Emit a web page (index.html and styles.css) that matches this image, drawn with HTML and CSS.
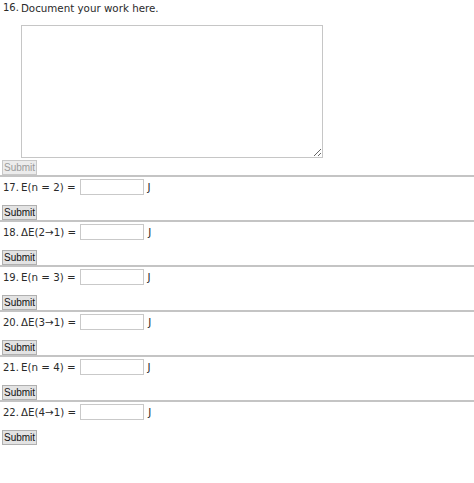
FILE: index.html
```html
<!DOCTYPE html>
<html>
<head>
<meta charset="utf-8">
<link rel="stylesheet" href="styles.css">
</head>
<body>
<div class="block first">
  <div class="row"><span class="num">16.</span><span class="q">Document your work here.</span></div>
  <textarea class="work"></textarea>
  <button class="btn" disabled>Submit</button>
</div>
<hr class="sep">
<div class="block">
  <div class="row"><span class="num">17.</span><span class="q">E(n = 2) =</span><input class="ans" type="text"><span class="unit">J</span></div>
  <button class="btn">Submit</button>
</div>
<hr class="sep">
<div class="block">
  <div class="row"><span class="num">18.</span><span class="q">ΔE(2→1) =</span><input class="ans" type="text"><span class="unit">J</span></div>
  <button class="btn">Submit</button>
</div>
<hr class="sep">
<div class="block">
  <div class="row"><span class="num">19.</span><span class="q">E(n = 3) =</span><input class="ans" type="text"><span class="unit">J</span></div>
  <button class="btn">Submit</button>
</div>
<hr class="sep">
<div class="block">
  <div class="row"><span class="num">20.</span><span class="q">ΔE(3→1) =</span><input class="ans" type="text"><span class="unit">J</span></div>
  <button class="btn">Submit</button>
</div>
<hr class="sep">
<div class="block">
  <div class="row"><span class="num">21.</span><span class="q">E(n = 4) =</span><input class="ans" type="text"><span class="unit">J</span></div>
  <button class="btn">Submit</button>
</div>
<hr class="sep">
<div class="block">
  <div class="row"><span class="num">22.</span><span class="q">ΔE(4→1) =</span><input class="ans" type="text"><span class="unit">J</span></div>
  <button class="btn">Submit</button>
</div>
</body>
</html>
```
FILE: styles.css
```css
html, body {
  margin: 0;
  padding: 0;
  background: #fff;
}
body {
  font-family: "DejaVu Sans", Verdana, sans-serif;
  font-size: 10.3px;
  color: #2a2a2a;
}
.block {
  display: flex;
  flex-direction: column;
  align-items: flex-start;
  padding: 0 0 0 2px;
}
.row {
  display: flex;
  align-items: center;
  height: 18px;
  margin-top: 1px;
}
.first .row {
  margin-top: 0;
  height: 17px;
  align-items: flex-start;
  padding-top: 2px;
  box-sizing: border-box;
}
.num {
  margin-left: 1px;
  margin-right: 2px;
  font-size: 10px;
}
.q {
  white-space: pre;
}
.ans {
  box-sizing: border-box;
  width: 64px;
  height: 16px;
  margin: 0 0 0 4px;
  padding: 0;
  border: 1px solid #c9c9c9;
  background: #fff;
}
.unit {
  margin-left: 4px;
}
.work {
  display: block;
  box-sizing: border-box;
  width: 302px;
  height: 133px;
  margin: 8px 0 2px 19px;
  border: 1px solid #c6c6c6;
  resize: both;
  padding: 0;
}
.btn {
  box-sizing: border-box;
  height: 15px;
  padding: 0 1px;
  margin: 9px 0 0 0;
  font-family: "Liberation Sans", Arial, sans-serif;
  font-size: 10px;
  line-height: 11px;
  color: #111;
  background: #e3e3e3;
  border: 1px solid #b0b0b0;
  border-radius: 0;
}
.first .btn {
  margin-top: 0;
}
.btn:disabled {
  color: #9a9a9a;
  background: #ececec;
  border-color: #c8c8c8;
}
.sep {
  margin: 0;
  border: 0;
  border-top: 2px solid #c4c4c4;
  height: 0;
}
```
